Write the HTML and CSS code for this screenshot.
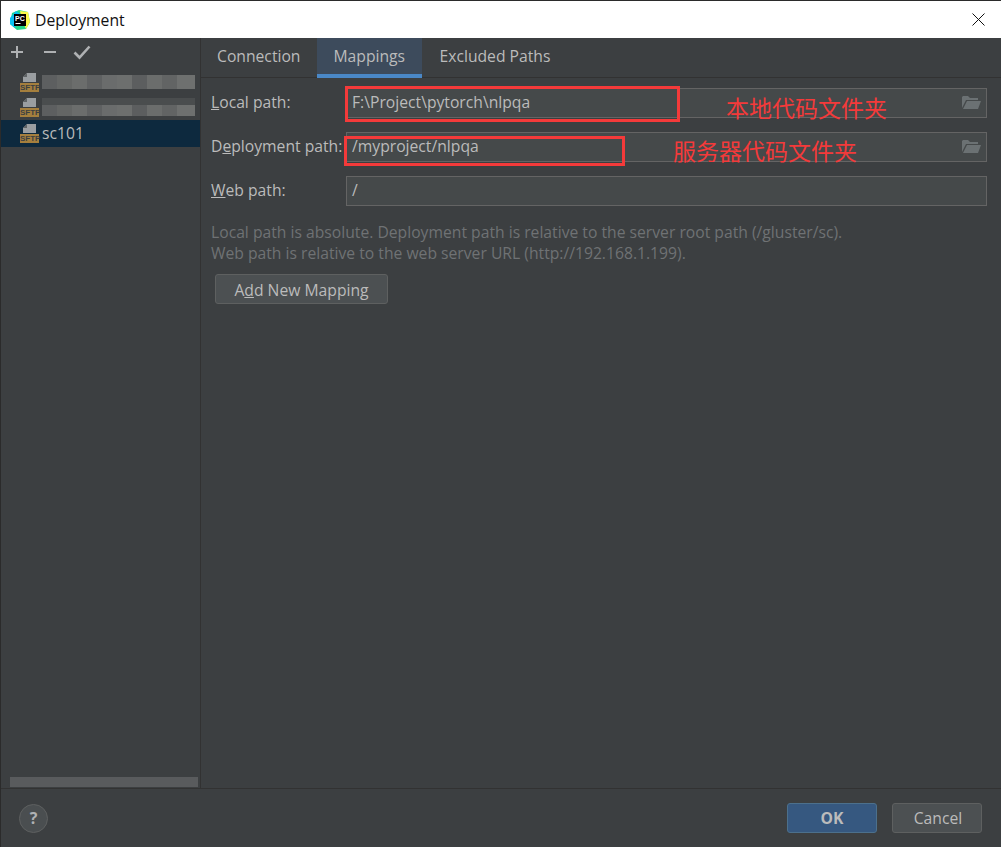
FILE: index.html
```html
<!DOCTYPE html>
<html lang="en">
<head>
<meta charset="utf-8">
<title>Deployment</title>
<link rel="stylesheet" href="styles.css">
</head>
<body>
<div class="window">
  <header class="titlebar">
    <svg class="app-icon" width="20" height="20" viewBox="0 0 20 20">
      <path d="M2 3 L9 0 L18 2 L20 12 L16 19 L7 20 L0 14 Z" fill="#21d789"/>
      <path d="M10 1 L18 2 L20 12 L16 19 L12 10 Z" fill="#fcf84a"/>
      <path d="M0 8 L6 1 L10 4 L5 18 L0 14 Z" fill="#07c3f2"/>
      <rect x="4" y="4" width="12" height="12" fill="#000"/>
      <rect x="5.5" y="13" width="5" height="1" fill="#fff"/>
      <text class="logo-text" x="5" y="11">PC</text>
    </svg>
    <span class="title">Deployment</span>
    <svg class="close" width="13" height="13" viewBox="0 0 13 13"><path d="M0.5 0.5 L12.5 12.5 M12.5 0.5 L0.5 12.5" stroke="#111" stroke-width="1" fill="none"/></svg>
  </header>
  <div class="content">
    <aside class="sidebar">
      <div class="toolbar">
        <svg width="14" height="14" viewBox="0 0 14 14"><path d="M7 1 V13 M1 7 H13" stroke="#afb1b3" stroke-width="2" fill="none"/></svg>
        <svg width="14" height="14" viewBox="0 0 14 14"><path d="M1 7 H13" stroke="#afb1b3" stroke-width="2" fill="none"/></svg>
        <svg width="18" height="16" viewBox="0 0 18 16"><path d="M1.5 8.5 L6.5 13.5 L16.5 2.5" stroke="#afb1b3" stroke-width="2.6" fill="none"/></svg>
      </div>
      <ul class="servers">
        <li class="server">
          <span class="sftp"><svg width="14" height="9" viewBox="0 0 14 9"><path d="M0 9 V4 L4 0 H13 V9 Z" fill="#9a9ea1"/><path d="M0 4 H4 V0 Z" fill="#5f6365"/></svg><b>SFTP</b></span>
          <span class="blur blur-one"></span>
        </li>
        <li class="server">
          <span class="sftp"><svg width="14" height="9" viewBox="0 0 14 9"><path d="M0 9 V4 L4 0 H13 V9 Z" fill="#9a9ea1"/><path d="M0 4 H4 V0 Z" fill="#5f6365"/></svg><b>SFTP</b></span>
          <span class="blur blur-two"></span>
        </li>
        <li class="server selected">
          <span class="sftp"><svg width="14" height="9" viewBox="0 0 14 9"><path d="M0 9 V4 L4 0 H13 V9 Z" fill="#9a9ea1"/><path d="M0 4 H4 V0 Z" fill="#5f6365"/></svg><b>SFTP</b></span>
          <span class="server-name">sc101</span>
        </li>
      </ul>
      <div class="hscroll"></div>
    </aside>
    <main class="panel">
      <nav class="tabs">
        <span class="tab">Connection</span>
        <span class="tab active">Mappings</span>
        <span class="tab">Excluded Paths</span>
      </nav>
      <div class="form">
        <div class="row">
          <label class="label"><u>L</u>ocal path:</label>
          <div class="field"><span>F:\Project\pytorch\nlpqa</span>
            <svg class="folder" width="20" height="14" viewBox="0 0 20 14"><path d="M1 13 V2 L2 1 H7 L9 3 H17 V5 H5 L1 13 Z" fill="#6b7173"/><path d="M2 14 L6 6 H20 L17 14 Z" fill="#6b7173"/></svg>
          </div>
        </div>
        <div class="row">
          <label class="label">D<u>e</u>ployment path:</label>
          <div class="field"><span>/myproject/nlpqa</span>
            <svg class="folder" width="20" height="14" viewBox="0 0 20 14"><path d="M1 13 V2 L2 1 H7 L9 3 H17 V5 H5 L1 13 Z" fill="#6b7173"/><path d="M2 14 L6 6 H20 L17 14 Z" fill="#6b7173"/></svg>
          </div>
        </div>
        <div class="row">
          <label class="label"><u>W</u>eb path:</label>
          <div class="field"><span>/</span></div>
        </div>
        <p class="hint">Local path is absolute. Deployment path is relative to the server root path (/gluster/sc).<br>Web path is relative to the web server URL (http://192.168.1.199).</p>
        <button class="btn add">A<u>d</u>d New Mapping</button>
      </div>
    </main>
  </div>
  <footer class="footer">
    <span class="help">?</span>
    <div class="actions">
      <button class="btn ok">OK</button>
      <button class="btn cancel">Cancel</button>
    </div>
  </footer>
  <div class="mark mark-local"></div>
  <div class="mark mark-deploy"></div>
  <div class="note note-local">本地代码文件夹</div>
  <div class="note note-deploy">服务器代码文件夹</div>
</div>
</body>
</html>
```
FILE: styles.css
```css
* { box-sizing: border-box; }
html, body { margin: 0; padding: 0; height: 100%; }
body { font-family: "Open Sans", "Noto Sans", "Noto Sans CJK SC", sans-serif; font-size: 15.7px; color: #bbbbbb; background: #3c3f41; overflow: hidden; }
.window { position: relative; width: 1001px; height: 847px; display: flex; flex-direction: column; border: 1px solid #2b2b2b; border-bottom: 0; border-right: 0; background: #3c3f41; }
.titlebar { height: 37px; background: #fff; display: flex; align-items: center; padding: 0 16px 0 9px; color: #111; flex: none; }
.app-icon { margin-right: 5px; }
.logo-text { font: bold 7px "Liberation Sans", sans-serif; fill: #fff; }
.close { margin-left: auto; }
.content { flex: 1; display: flex; min-height: 0; }
.sidebar { width: 200px; flex: none; border-right: 1px solid #323232; display: flex; flex-direction: column; }
.toolbar { height: 28px; display: flex; align-items: center; padding-left: 9px; gap: 19px; flex: none; }
.toolbar svg:last-child { margin-left: -3px; }
.servers { list-style: none; margin: 0; padding: 4px 0 0; flex: 1; }
.server { height: 25px; display: flex; align-items: center; padding-left: 19px; gap: 3px; }
.server.selected { height: 27px; background: #0d293e; }
.server-name { position: relative; top: -1px; }
.sftp { width: 19px; display: flex; flex-direction: column; align-items: center; flex: none; }
.sftp svg { display: block; margin-bottom: 1px; }
.sftp b { display: block; width: 19px; height: 9px; background: #a57f3d; color: #3c3f41; font: bold 8px/9px "Liberation Sans", sans-serif; text-align: center; }
.blur { display: block; width: 153px; height: 14px; margin-top: -2px; background: linear-gradient(90deg, #5d5f60 0 15px, #646665 15px 30px, #6b6d6c 30px 45px, #5f6162 45px 60px, #6a6c6c 60px 75px, #6d6f6e 75px 90px, #5c5e5f 90px 105px, #6b6d6c 105px 120px, #626464 120px 135px, #6e706f 135px 153px); }
.blur-two { height: 18px; background: linear-gradient(180deg, #4a4d4e 0 7px, transparent 7px), linear-gradient(90deg, #5d5f60 0 15px, #646665 15px 30px, #6b6d6c 30px 45px, #5f6162 45px 60px, #6a6c6c 60px 75px, #6d6f6e 75px 90px, #5c5e5f 90px 105px, #6b6d6c 105px 120px, #626464 120px 135px, #6e706f 135px 153px); }
.hscroll { height: 10px; background: #595b5d; margin: 0 2px 1px 9px; flex: none; }
.panel { flex: 1; display: flex; flex-direction: column; min-width: 0; }
.tabs { height: 40px; display: flex; border-bottom: 1px solid #323232; flex: none; }
.tab { padding: 0 17px 0 16px; line-height: 36px; height: 40px; }
.tab.active { background: #3d4b5c; border-bottom: 4px solid #4a88c7; width: 105px; padding-left: 17px; margin-left: -1px; }
.tab.active + .tab { padding-left: 18px; }
.form { padding: 10px 14px 0 10px; }
.row { display: flex; align-items: center; height: 30px; margin-bottom: 14px; }
.label { width: 135px; flex: none; padding-bottom: 2px; }
.field { flex: 1; height: 30px; background: #45494a; border: 1px solid #646464; display: flex; align-items: center; justify-content: space-between; padding: 0 5px 2px; }
.hint { margin: 16px 0 0; color: #6f7274; line-height: 21px; }
.btn { font: inherit; color: #bbbbbb; border-radius: 3px; height: 30px; background: #4c5052; border: 1px solid #5e6060; padding: 0; }
.add { width: 173px; margin: 10px 0 0 4px; padding-top: 2px; display: block; }
.footer { height: 59px; border-top: 1px solid #323232; display: flex; align-items: center; justify-content: space-between; padding: 0 19px 0 18px; flex: none; }
.help { width: 29px; height: 29px; border-radius: 50%; border: 1px solid #5e6060; background: #4a4e50; display: flex; align-items: center; justify-content: center; font-weight: 700; font-size: 16px; color: #afb1b3; }
.actions { display: flex; gap: 15px; }
.ok { width: 90px; background: #365880; border-color: #4c708c; font-weight: 700; }
.cancel { width: 90px; padding-left: 2px; }
.mark { position: absolute; border: 3px solid #f43a3a; }
.mark-local { left: 344px; top: 85px; width: 335px; height: 36px; }
.mark-deploy { left: 343px; top: 135px; width: 281px; height: 30px; }
.note { position: absolute; font-family: "Noto Sans CJK SC", sans-serif; font-size: 23px; line-height: 30px; color: #f43a3a; white-space: nowrap; }
.note-local { left: 725px; top: 91px; }
.note-deploy { left: 672px; top: 134px; }
```
